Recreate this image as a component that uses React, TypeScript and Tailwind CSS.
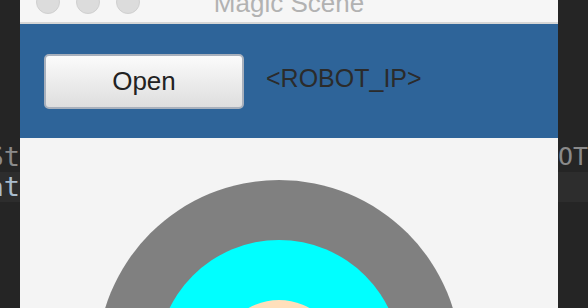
import React from 'react';

const sans = { fontFamily: '"Liberation Sans", Arial, sans-serif' };

const App: React.FC = () => {
    const rings = [
        { size: 'w-[364px] h-[364px]', color: 'bg-[#808080]' },
        { size: 'w-[244px] h-[244px]', color: 'bg-[#00ffff]' },
        { size: 'w-[124px] h-[124px]', color: 'bg-[#ffdfbb]' },
    ];

    const renderRing = (index: number): React.ReactNode => {
        const ring = rings[index];
        if (!ring) return null;
        return (
            <div className={`${ring.size} ${ring.color} rounded-full flex items-center justify-center shrink-0`}>
                {renderRing(index + 1)}
            </div>
        );
    };

    return (
        <div className="flex w-[588px] h-[308px] overflow-hidden bg-[#252525]">
            {/* editor behind the window, left side */}
            <div className="w-[20px] shrink-0 overflow-hidden flex flex-col pt-[142px] font-['DejaVu_Sans_Mono',monospace] text-[27px] leading-[30px]">
                <div className="flex justify-end text-[#8a8a8a] whitespace-nowrap">St</div>
                <div className="flex justify-end bg-[#2d2d2d] text-[#a9bccd] whitespace-nowrap">at</div>
            </div>

            {/* window */}
            <div className="w-[538px] shrink-0 flex flex-col bg-[#f4f4f4]" style={sans}>
                <div className="h-[24px] shrink-0 bg-[#f6f6f6] border-b-2 border-[#d6d6d6] relative flex justify-center">
                    <div className="absolute left-[16px] top-[-10px] flex gap-[16px]">
                        <div className="w-[24px] h-[24px] rounded-full bg-[#dcdcdc] border border-[#d0d0d0]" />
                        <div className="w-[24px] h-[24px] rounded-full bg-[#dcdcdc] border border-[#d0d0d0]" />
                        <div className="w-[24px] h-[24px] rounded-full bg-[#dcdcdc] border border-[#d0d0d0]" />
                    </div>
                    <span className="text-[26px] leading-none mt-[-10px] text-[#b2b2b2]">Magic Scene</span>
                </div>

                <div className="h-[114px] shrink-0 bg-[#2e6499] flex items-start pt-[30px] pl-[24px] gap-[22px]">
                    <button className="w-[200px] h-[55px] rounded-[5px] border-2 border-[#a8b0bc] bg-gradient-to-b from-[#fbfbfb] to-[#dedede] text-[26px] text-[#222] flex items-center justify-center">
                        Open
                    </button>
                    <span className="text-[25px] leading-none mt-[12px] text-[#2b2b2b]">&lt;ROBOT_IP&gt;</span>
                </div>

                <div className="flex-1 overflow-hidden pt-[42px] pl-[77px]">{renderRing(0)}</div>
            </div>

            {/* editor behind the window, right side */}
            <div className="w-[30px] shrink-0 overflow-hidden flex flex-col pt-[142px] font-['DejaVu_Sans_Mono',monospace] text-[25px] leading-[30px]">
                <div className="flex justify-end text-[#8a8a8a] whitespace-nowrap">OT</div>
                <div className="h-[30px] bg-[#2d2d2d]" />
            </div>
        </div>
    );
};

export default App;
